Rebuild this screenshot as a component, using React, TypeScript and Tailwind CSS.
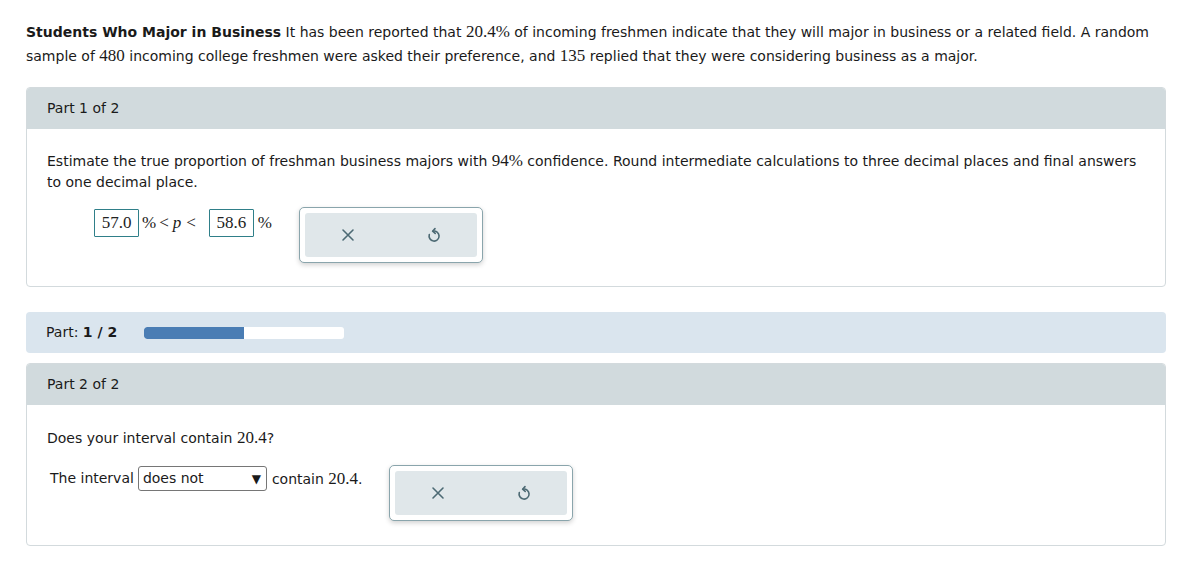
import React from "react";

function M({ children }: { children: React.ReactNode }) {
  return <span className="font-[family-name:'Liberation_Serif',serif] text-[17px]">{children}</span>;
}

function XIcon() {
  return (
    <svg width="14" height="14" viewBox="0 0 14 14" fill="none" stroke="#4d6a74" strokeWidth="1.6" strokeLinecap="round">
      <path d="M2 2 L12 12 M12 2 L2 12" />
    </svg>
  );
}

function UndoIcon() {
  return (
    <svg width="14" height="16" viewBox="0 0 14 16" fill="none" stroke="#4d6a74" strokeWidth="1.6" strokeLinecap="round" strokeLinejoin="round">
      <path d="M6 4.2 A5 5 0 1 1 2.3 7.6" />
      <path d="M8 1.6 L5.6 4.2 L8.2 6.4" />
    </svg>
  );
}

function Tools() {
  return (
    <div className="w-[184px] h-[56px] rounded-[5px] border border-[#8aa5ac] bg-white p-[5px] shadow-[0_2px_5px_rgba(0,0,0,0.18)]">
      <div className="h-full w-full rounded-[3px] bg-[#e0e7ea] flex items-center">
        <div className="flex-1 flex justify-center"><XIcon /></div>
        <div className="flex-1 flex justify-center"><UndoIcon /></div>
      </div>
    </div>
  );
}

function Box({ v }: { v: string }) {
  return (
    <span className="inline-flex items-center justify-center h-[28px] w-[45px] border border-[#2f7f89] rounded-[1px] text-[#222]">
      {v}
    </span>
  );
}

export default function App() {
  return (
    <div className="w-[1188px] min-h-[588px] bg-white text-[#1a1a1a] text-[14px] font-[family-name:'DejaVu_Sans',Verdana,sans-serif]">
      <div className="pl-[26px] pr-[22px] pt-[20px]">
        <p className="leading-[24px]">
          <b>Students Who Major in Business</b> It has been reported that <M>20.4%</M> of incoming freshmen indicate that they will major in business or a related field. A random sample of <M>480</M> incoming college freshmen were asked their preference, and <M>135</M> replied that they were considering business as a major.
        </p>

        <div className="mt-[19px] border border-[#d3dadd] rounded-[4px] overflow-hidden">
          <div className="h-[41px] bg-[#d1dadd] flex items-center px-[20px]">Part 1 of 2</div>
          <div className="px-[20px] pt-[21px] pb-[23px]">
            <p className="leading-[21px]">
              Estimate the true proportion of freshman business majors with <M>94%</M> confidence. Round intermediate calculations to three decimal places and final answers to one decimal place.
            </p>
            <div className="mt-[14px] ml-[47px] flex items-start">
              <div className="flex items-center pt-[2px] font-[family-name:'Liberation_Serif',serif] text-[17px]">
                <Box v="57.0" />
                <span className="ml-[3px]">%</span>
                <span className="ml-[3px]">&lt;</span>
                <span className="ml-[4px] italic">p</span>
                <span className="ml-[5px] mr-[13px]">&lt;</span>
                <Box v="58.6" />
                <span className="ml-[4px]">%</span>
              </div>
              <div className="ml-[27px]"><Tools /></div>
            </div>
          </div>
        </div>

        <div className="mt-[25px] h-[41px] rounded-[4px] bg-[#dae5ee] flex items-center px-[20px]">
          <span>Part: <b>1 / 2</b></span>
          <div className="ml-[27px] w-[200px] h-[12px] rounded-[3px] bg-white overflow-hidden">
            <div className="h-full w-[100px] bg-[#4a7db4] rounded-l-[3px]" />
          </div>
        </div>

        <div className="mt-[10px] border border-[#d3dadd] rounded-[4px] overflow-hidden">
          <div className="h-[41px] bg-[#d1dadd] flex items-center px-[20px]">Part 2 of 2</div>
          <div className="px-[20px] pt-[22px] pb-[24px]">
            <p className="leading-[21px]">Does your interval contain <M>20.4</M>?</p>
            <div className="mt-[16px] flex items-start">
              <div className="flex items-center ml-[3px] pt-[1px]">
                <span>The interval</span>
                <div className="ml-[4px] w-[129px] h-[25px] border border-[#767676] rounded-[3px] flex items-center justify-between pl-[4px] pr-[5px]">
                  <span>does not</span>
                  <span className="text-[12px]">▼</span>
                </div>
                <span className="ml-[5px]">contain <M>20.4</M>.</span>
              </div>
              <div className="ml-[26px]"><Tools /></div>
            </div>
          </div>
        </div>
      </div>
    </div>
  );
}
